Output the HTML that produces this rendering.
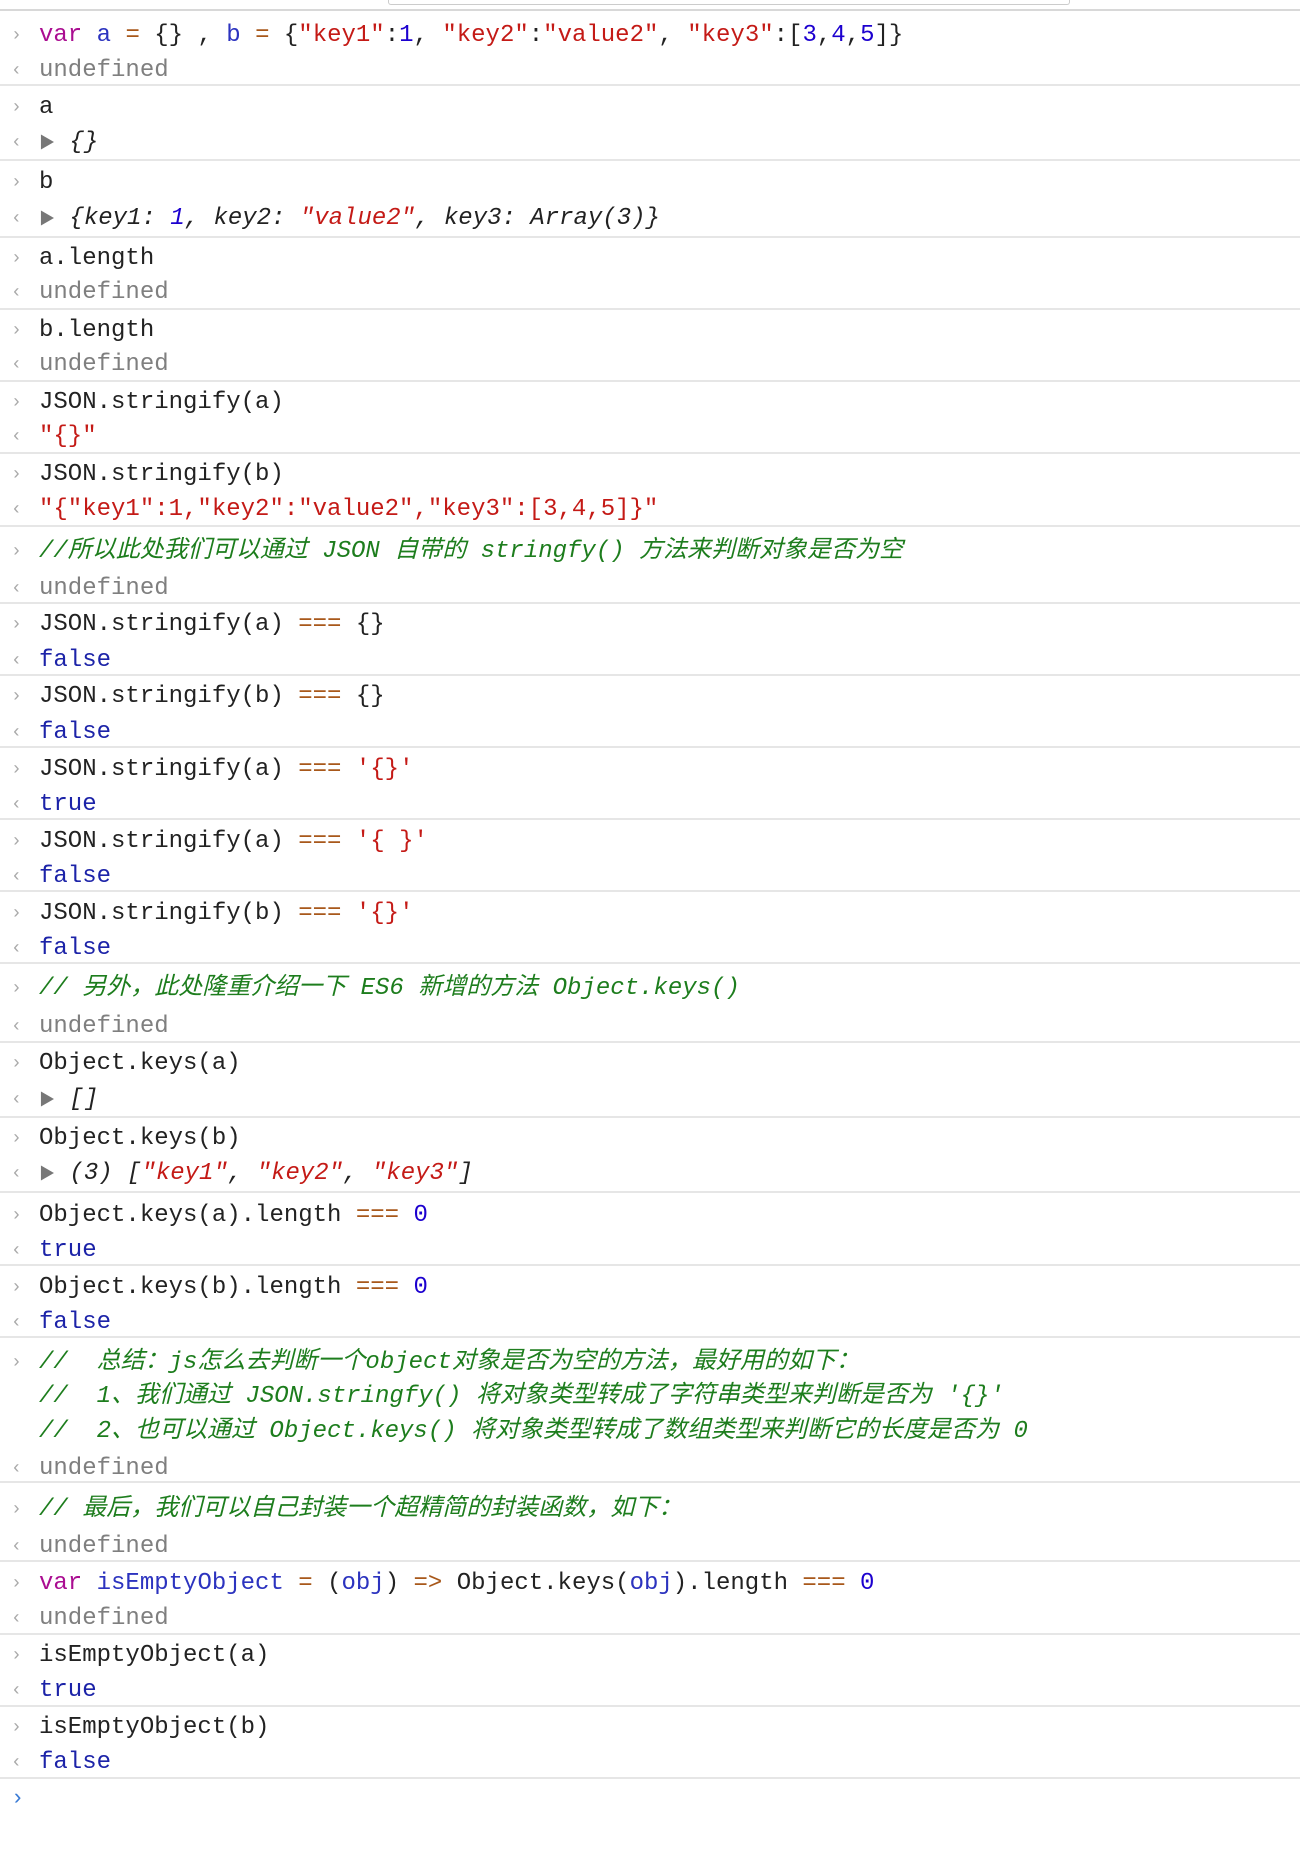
<!DOCTYPE html>
<html><head><meta charset="utf-8"><style>
html,body{margin:0;padding:0;background:#fff;}
body{width:1300px;height:1850px;position:relative;overflow:hidden;font-family:"Liberation Mono","Noto Sans CJK SC",monospace;font-size:24px;color:#222;}
.l{position:absolute;left:39px;height:34px;line-height:34px;white-space:pre;margin-top:3px;}
.a{position:absolute;left:11px;font-size:18px;color:#aaa;height:34px;line-height:34px;margin-top:3px;}
.s{position:absolute;left:0;width:1300px;height:2px;background:#e6e6e6;}
.k{color:#aa0d91}.v{color:#2c33bf}.r{color:#c41a16}.n{color:#1c00cf}.o{color:#a8581a}.u{color:#7f7f7f}.b{color:#1c23a8}
.c{color:#1d7d1d;font-style:italic}.i{font-style:italic}.t{color:#777;font-size:16px;font-style:normal}
</style></head><body>
<div style="position:absolute;left:0;top:9px;width:1300px;height:2px;background:#d8d8d8"></div>
<div style="position:absolute;left:388px;top:0;width:680px;height:4px;border:1px solid #ccc;border-top:none;border-radius:0 0 3px 3px"></div>

<div class="a" style="top:16px">›</div><div class="l" style="top:16px"><span class="k">var</span> <span class="v">a</span> <span class="o">=</span> {} , <span class="v">b</span> <span class="o">=</span> {<span class="r">"key1"</span>:<span class="n">1</span>, <span class="r">"key2"</span>:<span class="r">"value2"</span>, <span class="r">"key3"</span>:[<span class="n">3</span>,<span class="n">4</span>,<span class="n">5</span>]}</div>
<div class="a" style="top:51px">‹</div><div class="l u" style="top:51px">undefined</div>
<div class="s" style="top:84px"></div>

<div class="a" style="top:88px">›</div><div class="l" style="top:88px">a</div>
<div class="a" style="top:123px">‹</div><div class="l i" style="top:123px"><span class="t">▶</span> {}</div>
<div class="s" style="top:159px"></div>

<div class="a" style="top:163px">›</div><div class="l" style="top:163px">b</div>
<div class="a" style="top:199px">‹</div><div class="l i" style="top:199px"><span class="t">▶</span> {key1: <span class="n">1</span>, key2: <span class="r">"value2"</span>, key3: Array(3)}</div>
<div class="s" style="top:236px"></div>

<div class="a" style="top:239px">›</div><div class="l" style="top:239px">a.length</div>
<div class="a" style="top:273px">‹</div><div class="l u" style="top:273px">undefined</div>
<div class="s" style="top:308px"></div>

<div class="a" style="top:311px">›</div><div class="l" style="top:311px">b.length</div>
<div class="a" style="top:345px">‹</div><div class="l u" style="top:345px">undefined</div>
<div class="s" style="top:380px"></div>

<div class="a" style="top:383px">›</div><div class="l" style="top:383px">JSON.stringify(a)</div>
<div class="a" style="top:417px">‹</div><div class="l r" style="top:417px">"{}"</div>
<div class="s" style="top:452px"></div>

<div class="a" style="top:455px">›</div><div class="l" style="top:455px">JSON.stringify(b)</div>
<div class="a" style="top:490px">‹</div><div class="l r" style="top:490px">"{"key1":1,"key2":"value2","key3":[3,4,5]}"</div>
<div class="s" style="top:525px"></div>

<div class="a" style="top:532px">›</div><div class="l c" style="top:532px">//所以此处我们可以通过 JSON 自带的 stringfy() 方法来判断对象是否为空</div>
<div class="a" style="top:569px">‹</div><div class="l u" style="top:569px">undefined</div>
<div class="s" style="top:602px"></div>

<div class="a" style="top:605px">›</div><div class="l" style="top:605px">JSON.stringify(a) <span class="o">===</span> {}</div>
<div class="a" style="top:641px">‹</div><div class="l b" style="top:641px">false</div>
<div class="s" style="top:674px"></div>

<div class="a" style="top:677px">›</div><div class="l" style="top:677px">JSON.stringify(b) <span class="o">===</span> {}</div>
<div class="a" style="top:713px">‹</div><div class="l b" style="top:713px">false</div>
<div class="s" style="top:746px"></div>

<div class="a" style="top:750px">›</div><div class="l" style="top:750px">JSON.stringify(a) <span class="o">===</span> <span class="r">'{}'</span></div>
<div class="a" style="top:785px">‹</div><div class="l b" style="top:785px">true</div>
<div class="s" style="top:818px"></div>

<div class="a" style="top:822px">›</div><div class="l" style="top:822px">JSON.stringify(a) <span class="o">===</span> <span class="r">'{ }'</span></div>
<div class="a" style="top:857px">‹</div><div class="l b" style="top:857px">false</div>
<div class="s" style="top:890px"></div>

<div class="a" style="top:894px">›</div><div class="l" style="top:894px">JSON.stringify(b) <span class="o">===</span> <span class="r">'{}'</span></div>
<div class="a" style="top:929px">‹</div><div class="l b" style="top:929px">false</div>
<div class="s" style="top:962px"></div>

<div class="a" style="top:969px">›</div><div class="l c" style="top:969px">// 另外，此处隆重介绍一下 ES6 新增的方法 Object.keys()</div>
<div class="a" style="top:1007px">‹</div><div class="l u" style="top:1007px">undefined</div>
<div class="s" style="top:1041px"></div>

<div class="a" style="top:1044px">›</div><div class="l" style="top:1044px">Object.keys(a)</div>
<div class="a" style="top:1080px">‹</div><div class="l i" style="top:1080px"><span class="t">▶</span> []</div>
<div class="s" style="top:1116px"></div>

<div class="a" style="top:1119px">›</div><div class="l" style="top:1119px">Object.keys(b)</div>
<div class="a" style="top:1154px">‹</div><div class="l i" style="top:1154px"><span class="t">▶</span> (3) [<span class="r">"key1"</span>, <span class="r">"key2"</span>, <span class="r">"key3"</span>]</div>
<div class="s" style="top:1191px"></div>

<div class="a" style="top:1196px">›</div><div class="l" style="top:1196px">Object.keys(a).length <span class="o">===</span> <span class="n">0</span></div>
<div class="a" style="top:1231px">‹</div><div class="l b" style="top:1231px">true</div>
<div class="s" style="top:1264px"></div>

<div class="a" style="top:1268px">›</div><div class="l" style="top:1268px">Object.keys(b).length <span class="o">===</span> <span class="n">0</span></div>
<div class="a" style="top:1303px">‹</div><div class="l b" style="top:1303px">false</div>
<div class="s" style="top:1336px"></div>

<div class="a" style="top:1343px">›</div><div class="l c" style="top:1343px">//  总结：js怎么去判断一个object对象是否为空的方法，最好用的如下：</div>
<div class="l c" style="top:1377px">//  1、我们通过 JSON.stringfy() 将对象类型转成了字符串类型来判断是否为 '{}'</div>
<div class="l c" style="top:1412px">//  2、也可以通过 Object.keys() 将对象类型转成了数组类型来判断它的长度是否为 0</div>
<div class="a" style="top:1449px">‹</div><div class="l u" style="top:1449px">undefined</div>
<div class="s" style="top:1481px"></div>

<div class="a" style="top:1490px">›</div><div class="l c" style="top:1490px">// 最后，我们可以自己封装一个超精简的封装函数，如下：</div>
<div class="a" style="top:1527px">‹</div><div class="l u" style="top:1527px">undefined</div>
<div class="s" style="top:1560px"></div>

<div class="a" style="top:1564px">›</div><div class="l" style="top:1564px"><span class="k">var</span> <span class="v">isEmptyObject</span> <span class="o">=</span> (<span class="v">obj</span>) <span class="o">=&gt;</span> Object.keys(<span class="v">obj</span>).length <span class="o">===</span> <span class="n">0</span></div>
<div class="a" style="top:1599px">‹</div><div class="l u" style="top:1599px">undefined</div>
<div class="s" style="top:1633px"></div>

<div class="a" style="top:1636px">›</div><div class="l" style="top:1636px">isEmptyObject(a)</div>
<div class="a" style="top:1671px">‹</div><div class="l b" style="top:1671px">true</div>
<div class="s" style="top:1705px"></div>

<div class="a" style="top:1708px">›</div><div class="l" style="top:1708px">isEmptyObject(b)</div>
<div class="a" style="top:1743px">‹</div><div class="l b" style="top:1743px">false</div>
<div class="s" style="top:1777px"></div>

<div class="a" style="top:1779px;color:#3a7bd5;font-size:22px">›</div>
</body></html>
